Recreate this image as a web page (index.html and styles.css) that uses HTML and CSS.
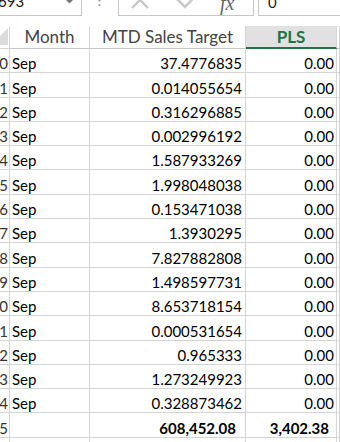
FILE: index.html
```html
<!DOCTYPE html>
<html lang="en">
<head>
    <meta charset="UTF-8">
    <title>PLS - Sheet</title>
    <link rel="stylesheet" href="styles.css">
</head>
<body>

<div class="formula-bar">
    <div class="name-box">
        <span class="name-text">693</span>
        <svg class="drop" width="7" height="4" viewBox="0 0 7 4"><polygon points="0,0 7,0 3.5,3.5" fill="#777"/></svg>
    </div>
    <svg class="grip" width="3" height="16" viewBox="0 0 3 16">
        <circle cx="1.5" cy="0.5" r="1.1" fill="#9a9a9a"/>
        <circle cx="1.5" cy="5" r="1.1" fill="#9a9a9a"/>
    </svg>
    <div class="fx-box">
        <svg class="fx-icons" width="80" height="15" viewBox="0 0 80 15">
            <path d="M13 -8 L29 8 M29 -8 L13 8" stroke="#c8c8c8" stroke-width="2.4" fill="none"/>
            <path d="M56 -3 L66 7 L84 -12" stroke="#c8c8c8" stroke-width="2.6" fill="none"/>
        </svg>
        <span class="fx">fx</span>
    </div>
    <div class="formula-input"><span class="formula-text">0</span></div>
</div>

<div class="gap"></div>

<div class="sheet">
    <div class="row head-row">
        <div class="cell corner">
            <svg width="9" height="22" viewBox="0 0 9 22"><polygon points="8,2 8,19 -9,19" fill="#dcdcdc"/></svg>
        </div>
        <div class="cell col-head">Month</div>
        <div class="cell col-head">MTD Sales Target</div>
        <div class="cell col-head selected">PLS</div>
        <div class="cell col-head"></div>
    </div>

    <div class="row"><div class="cell rh">20</div><div class="cell txt">Sep</div><div class="cell num">37.4776835</div><div class="cell num pls">0.00</div><div class="cell"></div></div>
    <div class="row"><div class="cell rh">21</div><div class="cell txt">Sep</div><div class="cell num">0.014055654</div><div class="cell num pls">0.00</div><div class="cell"></div></div>
    <div class="row"><div class="cell rh">22</div><div class="cell txt">Sep</div><div class="cell num">0.316296885</div><div class="cell num pls">0.00</div><div class="cell"></div></div>
    <div class="row"><div class="cell rh">23</div><div class="cell txt">Sep</div><div class="cell num">0.002996192</div><div class="cell num pls">0.00</div><div class="cell"></div></div>
    <div class="row"><div class="cell rh">24</div><div class="cell txt">Sep</div><div class="cell num">1.587933269</div><div class="cell num pls">0.00</div><div class="cell"></div></div>
    <div class="row"><div class="cell rh">25</div><div class="cell txt">Sep</div><div class="cell num">1.998048038</div><div class="cell num pls">0.00</div><div class="cell"></div></div>
    <div class="row"><div class="cell rh">26</div><div class="cell txt">Sep</div><div class="cell num">0.153471038</div><div class="cell num pls">0.00</div><div class="cell"></div></div>
    <div class="row"><div class="cell rh">27</div><div class="cell txt">Sep</div><div class="cell num">1.3930295</div><div class="cell num pls">0.00</div><div class="cell"></div></div>
    <div class="row"><div class="cell rh">28</div><div class="cell txt">Sep</div><div class="cell num">7.827882808</div><div class="cell num pls">0.00</div><div class="cell"></div></div>
    <div class="row"><div class="cell rh">29</div><div class="cell txt">Sep</div><div class="cell num">1.498597731</div><div class="cell num pls">0.00</div><div class="cell"></div></div>
    <div class="row"><div class="cell rh">30</div><div class="cell txt">Sep</div><div class="cell num">8.653718154</div><div class="cell num pls">0.00</div><div class="cell"></div></div>
    <div class="row"><div class="cell rh">31</div><div class="cell txt">Sep</div><div class="cell num">0.000531654</div><div class="cell num pls">0.00</div><div class="cell"></div></div>
    <div class="row"><div class="cell rh">32</div><div class="cell txt">Sep</div><div class="cell num">0.965333</div><div class="cell num pls">0.00</div><div class="cell"></div></div>
    <div class="row"><div class="cell rh">33</div><div class="cell txt">Sep</div><div class="cell num">1.273249923</div><div class="cell num pls">0.00</div><div class="cell"></div></div>
    <div class="row"><div class="cell rh">34</div><div class="cell txt">Sep</div><div class="cell num">0.328873462</div><div class="cell num pls">0.00</div><div class="cell"></div></div>
    <div class="row total"><div class="cell rh">35</div><div class="cell txt"></div><div class="cell num">608,452.08</div><div class="cell num pls">3,402.38</div><div class="cell"></div></div>
    <div class="row"><div class="cell rh">36</div><div class="cell txt"></div><div class="cell num"></div><div class="cell num pls"></div><div class="cell"></div></div>
</div>

</body>
</html>
```

FILE: styles.css
```css
body {
    margin: 0;
    font-family: Lato, "Liberation Sans", sans-serif;
    background: #fff;
    color: #000;
    overflow: hidden;
}

/* formula bar, cut off at the top of the window */
.formula-bar {
    display: flex;
    height: 16px;
    overflow: hidden;
}
.name-box {
    width: 82px;
    box-sizing: border-box;
    border-right: 1px solid #c6c6c6;
    border-bottom: 1px solid #c6c6c6;
    display: flex;
    align-items: flex-end;
}
.name-text {
    font-size: 15px;
    line-height: 18px;
    margin: 0 0 5px -2px;
    color: #222;
}
.drop {
    align-self: flex-start;
    margin-left: auto;
    margin-right: 8px;
}
.grip {
    margin-left: 16px;
    margin-right: 17px;
}
.fx-box {
    width: 136px;
    box-sizing: border-box;
    border-left: 1px solid #c6c6c6;
    border-right: 1px solid #c6c6c6;
    border-bottom: 1px solid #c6c6c6;
    display: flex;
    align-items: flex-end;
}
.fx-icons {
    align-self: flex-start;
}
.fx {
    font-family: "Liberation Serif", serif;
    font-style: italic;
    font-size: 20px;
    line-height: 20px;
    color: #666;
    margin: 0 0 2px 21px;
}
.formula-input {
    flex: 1;
    margin-left: 4px;
    border-left: 1px solid #c6c6c6;
    border-bottom: 1px solid #c6c6c6;
    display: flex;
    align-items: flex-end;
}
.formula-text {
    font-size: 15px;
    line-height: 18px;
    margin: 0 0 4px 9px;
    color: #222;
}
.gap {
    height: 10px;
}

/* grid */
.row {
    display: grid;
    grid-template-columns: 10px 80px 156px 91px 1fr;
    height: 24.3px;
}
.cell {
    box-sizing: border-box;
    border-right: 1px solid #d4d4d4;
    border-bottom: 1px solid #d4d4d4;
    display: flex;
    align-items: flex-end;
    overflow: hidden;
    white-space: nowrap;
    font-size: 15px;
    line-height: 18px;
}
.txt {
    padding-left: 2px;
}
.num {
    justify-content: flex-end;
    padding-right: 3px;
}
.num.pls {
    padding-right: 2px;
}
.rh {
    justify-content: flex-end;
    padding-right: 1px;
    color: #333;
}
.total .num {
    font-weight: bold;
    padding-right: 9px;
}
.total .num.pls {
    padding-right: 7px;
}

.head-row {
    height: 23px;
}
.col-head {
    justify-content: center;
    align-items: center;
    font-size: 17px;
    color: #444;
    border-bottom-color: #c6c6c6;
}
.corner {
    align-items: flex-start;
}
.selected {
    background: #e1e1e1;
    color: #217346;
    font-weight: bold;
    border-bottom: 2px solid #217346;
}
```
